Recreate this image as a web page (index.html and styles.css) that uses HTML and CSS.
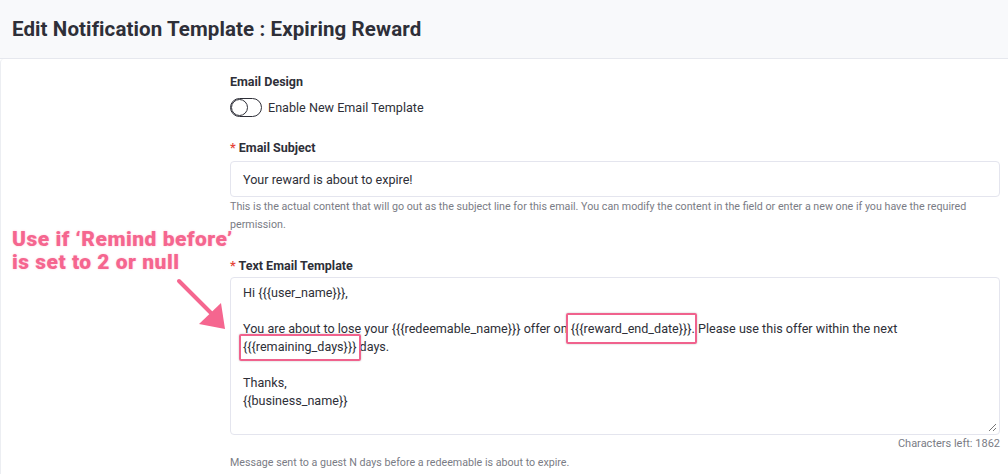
FILE: index.html
```html
<!DOCTYPE html>
<html>
<head>
<meta charset="utf-8">
<link rel="stylesheet" href="styles.css">
</head>
<body>
<header class="page-header">
  <h1 class="page-title">Edit Notification Template : Expiring Reward</h1>
</header>
<main class="card">
  <aside class="note">
    <p class="note-text">Use if ‘Remind before’<br>is set to 2 or null</p>
    <svg class="note-arrow" width="60" height="60" viewBox="0 0 60 60">
      <line x1="4" y1="4" x2="40" y2="40" stroke="#f5668f" stroke-width="4" stroke-linecap="round"/>
      <polygon points="50,52 24,47 46,26" fill="#f5668f"/>
    </svg>
  </aside>
  <section class="form">
    <div class="field field-design">
      <div class="label">Email Design</div>
      <label class="toggle-row">
        <span class="toggle"><span class="knob"></span></span>
        <span class="toggle-text">Enable New Email Template</span>
      </label>
    </div>
    <div class="field field-subject">
      <div class="label"><span class="req">*</span> Email Subject</div>
      <div class="input">Your reward is about to expire!</div>
      <p class="help">This is the actual content that will go out as the subject line for this email. You can modify the content in the field or enter a new one if you have the required permission.</p>
    </div>
    <div class="field">
      <div class="label"><span class="req">*</span> Text Email Template</div>
      <div class="textarea">
        <p>Hi {{{user_name}}},</p>
        <p>&nbsp;</p>
        <p>You are about to lose your {{{redeemable_name}}} offer on <span class="mark mark-a">{{{reward_end_date}}}</span>. Please use this offer within the next <span class="mark mark-b">{{{remaining_days}}}</span> days.</p>
        <p>&nbsp;</p>
        <p>Thanks,</p>
        <p>{{business_name}}</p>
        <svg class="grip" width="9" height="9" viewBox="0 0 9 9">
          <line x1="1" y1="8" x2="8" y2="1" stroke="#777" stroke-width="1"/>
          <line x1="5" y1="8" x2="8" y2="5" stroke="#777" stroke-width="1"/>
        </svg>
      </div>
      <div class="count">Characters left: 1862</div>
      <p class="help help-last">Message sent to a guest N days before a redeemable is about to expire.</p>
    </div>
  </section>
</main>
</body>
</html>
```
FILE: styles.css
```css
* { box-sizing: border-box; }
html, body { margin: 0; padding: 0; }
body {
  font-family: Roboto, "Noto Sans", sans-serif;
  color: #2b2b33;
  background: #ffffff;
  width: 1008px;
  height: 474px;
  overflow: hidden;
}
.page-header {
  height: 59px;
  background: #f8f9fb;
  border-bottom: 1px solid #e6e8ee;
  display: flex;
  align-items: center;
  padding: 0 12px;
}
.page-title {
  margin: 0;
  font-size: 20.5px;
  font-weight: 700;
  color: #2e2f38;
  letter-spacing: 0.1px;
}
.card {
  position: relative;
  display: flex;
  border-left: 1px solid #eceef2;
  border-top-left-radius: 4px;
  height: 415px;
}
.note {
  width: 229px;
  flex: none;
  position: relative;
}
.note-text {
  position: absolute;
  left: 11px;
  top: 169px;
  margin: 0;
  font-family: Roboto, sans-serif;
  font-weight: 900;
  font-size: 21px;
  letter-spacing: 0.5px;
  line-height: 23px;
  color: #f5668f;
  white-space: nowrap;
  text-shadow: 0 0 2px rgba(245, 102, 143, 0.35);
}
.note-arrow {
  position: absolute;
  left: 174px;
  top: 218px;
}
.form {
  width: 770px;
  padding-top: 15px;
}
.field { margin-bottom: 24px; }
.field-design { margin-bottom: 24px; }
.label {
  font-size: 12.5px;
  font-weight: 700;
  color: #2e2f38;
  line-height: 16px;
}
.req { color: #e5453b; font-weight: 700; }
.toggle-row {
  display: flex;
  align-items: center;
  gap: 6px;
  margin-top: 8px;
  height: 18px;
  font-size: 12.6px;
  color: #2e2f38;
}
.toggle {
  width: 32px;
  height: 19px;
  border: 1px solid #2e2f38;
  border-radius: 10px;
  position: relative;
  display: inline-block;
}
.knob {
  position: absolute;
  left: 0px;
  top: 0px;
  width: 17px;
  height: 17px;
  border: 1px solid #2e2f38;
  border-radius: 50%;
  background: #fff;
}
.input {
  margin-top: 5px;
  height: 36px;
  border: 1px solid #e4e5ee;
  border-radius: 4px;
  padding: 0 12px;
  display: flex;
  align-items: center;
  font-size: 12.6px;
  color: #2e2f38;
}
.help {
  margin: 1px 0 0;
  font-size: 10.7px;
  line-height: 18px;
  color: #7a7c85;
}
.textarea {
  position: relative;
  margin-top: 3px;
  height: 158px;
  border: 1px solid #e4e5ee;
  border-radius: 4px;
  padding: 6px 12px;
  font-size: 12.6px;
  line-height: 18px;
  color: #2e2f38;
}
.textarea p { margin: 0; }
.mark { position: relative; }
.mark::after {
  content: "";
  position: absolute;
  border: 2px solid #f0628d;
  border-radius: 2px;
  box-shadow: 0 0 2px rgba(0,0,0,0.25);
}
.mark-a::after { left: -5px; right: -5px; top: -8px; bottom: -8px; }
.mark-b::after { left: -4px; right: -5px; top: -5px; bottom: -7px; }
.grip {
  position: absolute;
  right: 2px;
  bottom: 2px;
}
.count {
  text-align: right;
  font-size: 11px;
  color: #7a7c85;
  margin-top: 2px;
  line-height: 14px;
}
.help-last { margin-top: 3px; }
```
